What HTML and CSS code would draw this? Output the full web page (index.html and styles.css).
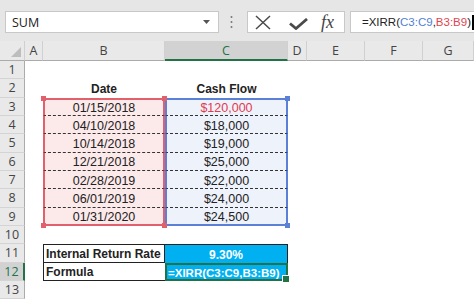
FILE: index.html
```html
<!DOCTYPE html>
<html lang="en">
<head>
    <meta charset="UTF-8">
    <title>XIRR</title>
    <link rel="stylesheet" href="styles.css">
</head>
<body>
    <div class="toolbar">
        <div class="namebox">
            <span>SUM</span>
            <svg width="7" height="4" viewBox="0 0 7 4"><path d="M0 0 L7 0 L3.5 4 Z" fill="#555"/></svg>
        </div>
        <svg class="grip" width="3" height="14" viewBox="0 0 3 14">
            <circle cx="1.5" cy="2" r="1" fill="#777"/>
            <circle cx="1.5" cy="7" r="1" fill="#777"/>
            <circle cx="1.5" cy="12" r="1" fill="#777"/>
        </svg>
        <div class="fxbtns">
            <svg width="16" height="15" viewBox="0 0 16 15"><path d="M1 1 L15 14 M15 1 L1 14" stroke="#4a4a4a" stroke-width="1.5" fill="none"/></svg>
            <svg class="check" width="19" height="12" viewBox="0 0 19 12"><path d="M1 5.5 L7 10.5 L18 1" stroke="#4a4a4a" stroke-width="2.8" fill="none"/></svg>
            <span class="fx">fx</span>
        </div>
        <div class="formula">=XIRR(<span class="ref-c">C3:C9</span>,<span class="ref-b">B3:B9</span>)<span class="caret"></span></div>
    </div>

    <div class="sheet">
        <!-- column headers -->
        <div class="corner"><span class="tri"></span></div>
        <div class="ch">A</div>
        <div class="ch">B</div>
        <div class="ch sel">C</div>
        <div class="ch">D</div>
        <div class="ch">E</div>
        <div class="ch">F</div>
        <div class="ch">G</div>

        <div class="rh">1</div>

        <div class="rh">2</div><div></div>
        <div class="cell bold">Date</div>
        <div class="cell bold">Cash Flow</div>

        <div class="rh">3</div><div></div>
        <div class="cell rb first">01/15/2018</div>
        <div class="cell rc first neg">$120,000</div>

        <div class="rh">4</div><div></div>
        <div class="cell rb">04/10/2018</div>
        <div class="cell rc">$18,000</div>

        <div class="rh">5</div><div></div>
        <div class="cell rb">10/14/2018</div>
        <div class="cell rc">$19,000</div>

        <div class="rh">6</div><div></div>
        <div class="cell rb">12/21/2018</div>
        <div class="cell rc">$25,000</div>

        <div class="rh">7</div><div></div>
        <div class="cell rb">02/28/2019</div>
        <div class="cell rc">$22,000</div>

        <div class="rh">8</div><div></div>
        <div class="cell rb">06/01/2019</div>
        <div class="cell rc">$24,000</div>

        <div class="rh">9</div><div></div>
        <div class="cell rb last">01/31/2020</div>
        <div class="cell rc last">$24,500</div>

        <div class="rh">10</div>

        <div class="rh">11</div><div></div>
        <div class="cell bold label top">Internal Return Rate</div>
        <div class="cell bold rate top">9.30%</div>

        <div class="rh sel">12</div><div></div>
        <div class="cell bold label">Formula</div>
        <div class="cell bold rate active">=XIRR(C3:C9,B3:B9)</div>

        <div class="rh">13</div>
    </div>
</body>
</html>
```

FILE: styles.css
```css
* {
    margin: 0;
    padding: 0;
    box-sizing: border-box;
}
body {
    width: 474px;
    height: 301px;
    overflow: hidden;
    background-color: #fff;
    font-family: "Liberation Sans", Arial, sans-serif;
}

/* formula bar */
.toolbar {
    height: 41px;
    background-color: #e6e6e6;
    display: flex;
    align-items: flex-start;
    padding: 11px 0 0 5px;
}
.namebox {
    width: 216px;
    height: 22px;
    background-color: #fff;
    border: 1px solid #c8c8c8;
    display: flex;
    align-items: center;
    justify-content: space-between;
    padding: 0 8px 0 6px;
    font-family: "Open Sans", sans-serif;
    font-size: 12.5px;
    color: #222;
}
.grip {
    margin: 4px 0 0 11px;
}
.fxbtns {
    margin-left: 14px;
    width: 99px;
    height: 22px;
    background-color: #fff;
    border: 1px solid #c8c8c8;
    display: flex;
    align-items: center;
    padding-left: 7px;
}
.check {
    margin-left: 18px;
    margin-top: 3px;
}
.fx {
    margin-left: 13px;
    font-family: "Liberation Serif", serif;
    font-style: italic;
    font-size: 18px;
    color: #444;
}
.formula {
    margin-left: 5px;
    flex: 1;
    height: 22px;
    background-color: #fff;
    border: 1px solid #c8c8c8;
    border-right: none;
    padding-left: 11px;
    display: flex;
    align-items: center;
    white-space: nowrap;
    font-size: 11.5px;
    color: #222;
}
.ref-c {
    color: #4f7fd6;
}
.ref-b {
    color: #e0454f;
}
.caret {
    width: 2px;
    height: 15px;
    background-color: #000;
    margin-left: 1px;
}

/* grid */
.sheet {
    display: grid;
    grid-template-columns: 25px 18px 122px 123px 19px 58px 58px 1fr;
    grid-template-rows: 20px repeat(13, 18.33px);
    font-size: 12.5px;
    color: #222;
}
.corner, .ch {
    background-color: #e9e9e9;
    border-right: 1px solid #d0d0d0;
    border-bottom: 1px solid #ababab;
}
.corner {
    position: relative;
}
.corner .tri {
    position: absolute;
    right: 3px;
    bottom: 3px;
    width: 0;
    height: 0;
    border-left: 10px solid transparent;
    border-bottom: 10px solid #bdbdbd;
}
.ch {
    display: flex;
    align-items: center;
    justify-content: center;
    font-family: "Open Sans", sans-serif;
    font-size: 12.5px;
    color: #444;
}
.ch.sel {
    background-color: #d2d2d2;
    color: #217346;
    border-bottom: 2px solid #217346;
}
.rh {
    grid-column: 1;
    background-color: #e9e9e9;
    border-right: 1px solid #ababab;
    border-bottom: 1px solid #d4d4d4;
    display: flex;
    align-items: center;
    justify-content: center;
    font-family: "Open Sans", sans-serif;
    font-size: 12.5px;
    color: #444;
}
.rh.sel {
    background-color: #d2d2d2;
    color: #217346;
    border-right: 2px solid #217346;
}

/* cells */
.cell {
    position: relative;
    display: flex;
    align-items: center;
    justify-content: center;
    padding-top: 2px;
    white-space: nowrap;
}
.bold {
    font-weight: bold;
    font-size: 12px;
}
.rb, .rc {
    border-bottom: 1px dashed #333;
}
.rb {
    background-color: #fce9ea;
    border-left: 2px solid #e25f6c;
    border-right: 2px solid #e25f6c;
}
.rc {
    background-color: #eef2fb;
    border-left: 2px solid #5b80d8;
    border-right: 2px solid #5b80d8;
}
.rb.first {
    border-top: 2px solid #e25f6c;
}
.rc.first {
    border-top: 2px solid #5b80d8;
}
.rb.last {
    border-bottom: 2px solid #e25f6c;
}
.rc.last {
    border-bottom: 2px solid #5b80d8;
}
.neg {
    color: #e23b4e;
}

/* range corner handles */
.rb.first::before, .rb.first::after,
.rb.last::before, .rb.last::after,
.rc.first::after, .rc.last::after {
    content: "";
    position: absolute;
    width: 5px;
    height: 5px;
    z-index: 2;
}
.rb.first::before, .rb.first::after,
.rb.last::before, .rb.last::after {
    background-color: #e25f6c;
}
.rc.first::after, .rc.last::after {
    background-color: #5b80d8;
}
.rb.first::before { left: -4px; top: -4px; }
.rb.first::after { right: -4px; top: -4px; }
.rb.last::before { left: -4px; bottom: -4px; }
.rb.last::after { right: -4px; bottom: -4px; }
.rc.first::after { right: -4px; top: -4px; }
.rc.last::after { right: -4px; bottom: -4px; }

/* result block */
.label {
    justify-content: flex-start;
    padding-left: 2px;
    border-left: 1px solid #222;
    border-bottom: 1px solid #222;
}
.label.top {
    border-top: 1px solid #222;
    border-right: 1px solid #222;
}
.rate {
    background-color: #00b0f0;
    color: #fff;
}
.rate.top {
    border-top: 1px solid #222;
    border-right: 1px solid #222;
}
.rate.active {
    justify-content: flex-start;
    padding-left: 1px;
    font-size: 11.5px;
    border: 2px solid #217346;
}
.rate.active::after {
    content: "";
    position: absolute;
    right: -4px;
    bottom: -4px;
    width: 6px;
    height: 6px;
    background-color: #217346;
    border: 1px solid #fff;
    z-index: 2;
}
```
